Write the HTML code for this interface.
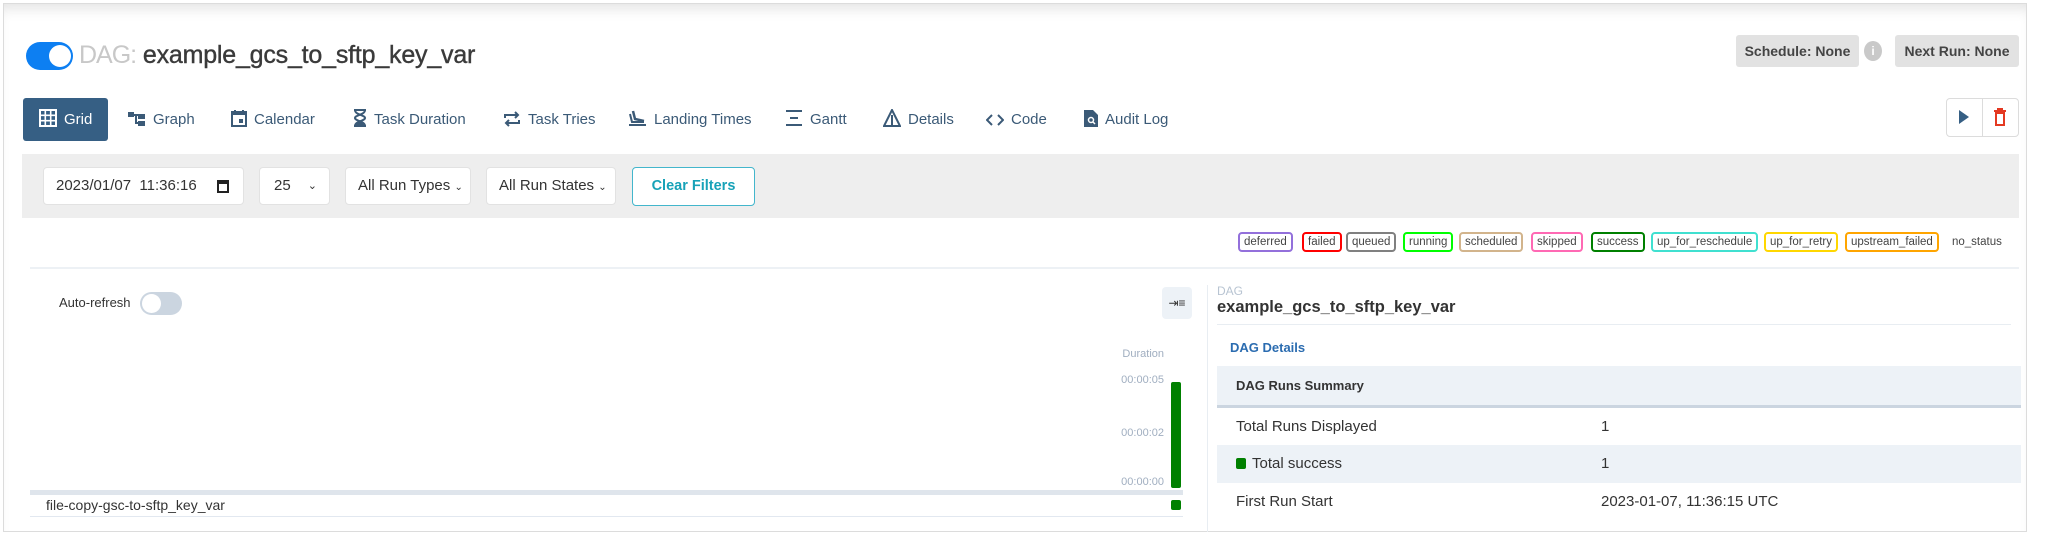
<!DOCTYPE html>
<html><head><meta charset="utf-8"><style>
*{box-sizing:border-box;margin:0;padding:0}
body{width:2048px;height:535px;background:#fff;font-family:"Liberation Sans",Arial,sans-serif;position:relative;overflow:hidden;color:#333}
.a{position:absolute}
.frame{left:3px;top:3px;width:2024px;height:529px;border:1px solid #dcdcdc;box-shadow:inset 0 12px 14px -8px rgba(0,0,0,.12)}
.nav{top:98px;height:43px;line-height:43px;font-size:15px;color:#3b5a77;white-space:nowrap}
.nav svg{vertical-align:-3px;margin-right:7px}
.inp{top:167px;height:38px;background:#fff;border:1px solid #e2e2e2;border-radius:4px;font-size:15px;line-height:36px;color:#333;padding-left:12px}
.lg{top:232px;height:20px;border:2px solid;border-radius:4px;font-size:11.5px;line-height:16px;padding:0 4px;color:#444;white-space:nowrap}
.row{left:1217px;width:804px;font-size:15px;color:#333}
.gl{font-size:11px;color:#a0aec0;text-align:right;width:60px;left:1104px}
</style></head><body>
<div class="a frame"></div>

<!-- header -->
<div class="a" style="left:26px;top:42px;width:47px;height:28px;border-radius:14px;background:#0d7ff2"></div>
<div class="a" style="left:49px;top:45px;width:22px;height:22px;border-radius:50%;background:#fff"></div>
<div class="a" style="left:79px;top:38px;font-size:25px;line-height:34px;white-space:nowrap;letter-spacing:-0.2px"><span style="color:#c8c8c8;letter-spacing:-1px">DAG:</span> <span style="color:#3a3a3a;-webkit-text-stroke:0.4px #3a3a3a">example_gcs_to_sftp_key_var</span></div>

<div class="a" style="left:1736px;top:35px;width:123px;height:32px;background:#e2e2e2;border-radius:3px;font-weight:bold;font-size:14px;line-height:32px;text-align:center;color:#444">Schedule: None</div>
<div class="a" style="left:1864px;top:41px;width:18px;height:20px;border-radius:50%;background:#c9c9c9;color:#fff;font-size:12px;text-align:center;line-height:20px;font-weight:bold">i</div>
<div class="a" style="left:1895px;top:35px;width:124px;height:32px;background:#e2e2e2;border-radius:3px;font-weight:bold;font-size:14px;line-height:32px;text-align:center;color:#444">Next Run: None</div>

<!-- nav -->
<div class="a nav" style="left:23px;width:85px;background:#365f84;border-radius:3px;color:#fff;padding-left:16px">
<svg width="18" height="18" viewBox="0 0 18 18"><rect x="1" y="1" width="16" height="16" fill="none" stroke="#fff" stroke-width="2"/><path d="M6.3 1v16M11.7 1v16M1 6.3h16M1 11.7h16" stroke="#fff" stroke-width="1.6"/></svg>Grid</div>
<div class="a nav" style="left:128px"><svg width="18" height="16" viewBox="0 0 18 16"><rect x="0" y="1" width="6" height="5" fill="#3b5a77"/><rect x="10" y="3" width="7" height="5" fill="#3b5a77"/><rect x="10" y="10" width="7" height="5" fill="#3b5a77"/><path d="M6 4h4M8 4v8h2" stroke="#3b5a77" stroke-width="2" fill="none"/></svg>Graph</div>
<div class="a nav" style="left:231px"><svg width="16" height="18" viewBox="0 0 16 18"><rect x="1" y="3" width="14" height="14" fill="none" stroke="#3b5a77" stroke-width="2"/><rect x="1" y="3" width="14" height="3" fill="#3b5a77"/><path d="M4 1v3M12 1v3" stroke="#3b5a77" stroke-width="2"/><rect x="8" y="10" width="4" height="4" fill="#3b5a77"/></svg>Calendar</div>
<div class="a nav" style="left:353px"><svg width="14" height="18" viewBox="0 0 14 18"><path d="M1 1h12M1 17h12M2 1c0 5 10 5 10 8s-10 3-10 8M12 1c0 5-10 5-10 8s10 3 10 8" stroke="#3b5a77" stroke-width="2" fill="none"/><path d="M3 16l4-5 4 5z" fill="#3b5a77"/></svg>Task Duration</div>
<div class="a nav" style="left:503px"><svg width="18" height="16" viewBox="0 0 18 16"><path d="M2 7V4h13M12 1l3 3-3 3M16 9v3H3M6 9l-3 3 3 3" stroke="#3b5a77" stroke-width="2" fill="none"/></svg>Task Tries</div>
<div class="a nav" style="left:627px"><svg width="20" height="18" viewBox="0 0 20 18"><path d="M2 16h17M3 5l2 8h12" stroke="#3b5a77" stroke-width="2" fill="none"/><path d="M6 2l2 8 9 2" stroke="#3b5a77" stroke-width="2.5" fill="none"/></svg>Landing Times</div>
<div class="a nav" style="left:785px"><svg width="18" height="18" viewBox="0 0 18 18"><path d="M1 2h16M5 9h8M1 16h16" stroke="#3b5a77" stroke-width="2"/></svg>Gantt</div>
<div class="a nav" style="left:883px"><svg width="18" height="18" viewBox="0 0 18 18"><path d="M9 1L1 17h16z" stroke="#3b5a77" stroke-width="2" fill="none"/><path d="M9 6v11" stroke="#3b5a77" stroke-width="2"/></svg>Details</div>
<div class="a nav" style="left:986px"><svg width="18" height="14" viewBox="0 0 18 14"><path d="M6 2L1 7l5 5M12 2l5 5-5 5" stroke="#3b5a77" stroke-width="2" fill="none"/></svg>Code</div>
<div class="a nav" style="left:1084px"><svg width="14" height="18" viewBox="0 0 14 18"><path d="M0 1h9l5 5v12H0z" fill="#3b5a77"/><circle cx="7" cy="11" r="2.5" stroke="#fff" stroke-width="1.5" fill="none"/><path d="M9 13l2 2" stroke="#fff" stroke-width="1.5"/></svg>Audit Log</div>

<div class="a" style="left:1946px;top:98px;width:73px;height:39px;border:1px solid #dcdcdc;border-radius:4px"></div>
<div class="a" style="left:1982px;top:98px;width:1px;height:39px;background:#dcdcdc"></div>
<svg class="a" style="left:1959px;top:110px" width="10" height="14"><path d="M0 0l10 7-10 7z" fill="#365f84"/></svg>
<svg class="a" style="left:1994px;top:108px" width="12" height="18" viewBox="0 0 12 18"><path d="M0 3h12M4 3V1h4v2" stroke="#e43921" stroke-width="2" fill="none"/><rect x="2" y="5" width="8" height="12" fill="none" stroke="#e43921" stroke-width="2"/></svg>

<!-- filters -->
<div class="a" style="left:22px;top:154px;width:1997px;height:64px;background:#eeeeee"></div>
<div class="a inp" style="left:43px;width:201px">2023/01/07&nbsp; 11:36:16 <svg style="position:absolute;right:14px;top:11px" width="12" height="14" viewBox="0 0 12 14"><rect x="1" y="2" width="10" height="11" fill="none" stroke="#222" stroke-width="2"/><rect x="1" y="2" width="10" height="3" fill="#222"/></svg></div>
<div class="a inp" style="left:259px;width:71px;padding-left:14px">25<span style="position:absolute;right:12px;font-size:11px">&#8964;</span></div>
<div class="a inp" style="left:345px;width:126px">All Run Types <span style="font-size:10px">&#8964;</span></div>
<div class="a inp" style="left:486px;width:130px">All Run States <span style="font-size:10px">&#8964;</span></div>
<div class="a" style="left:632px;top:167px;width:123px;height:39px;border:1.5px solid #43b6cc;border-radius:4px;background:#fff;color:#17a2b8;font-weight:bold;font-size:14.5px;text-align:center;line-height:36px">Clear Filters</div>

<!-- legend -->
<div class="a lg" style="left:1238px;border-color:#9370db">deferred</div>
<div class="a lg" style="left:1302px;border-color:#ff0000">failed</div>
<div class="a lg" style="left:1346px;border-color:#808080">queued</div>
<div class="a lg" style="left:1403px;border-color:#00ff00">running</div>
<div class="a lg" style="left:1459px;border-color:#d2b48c">scheduled</div>
<div class="a lg" style="left:1531px;border-color:#ff69b4">skipped</div>
<div class="a lg" style="left:1591px;border-color:#008000">success</div>
<div class="a lg" style="left:1651px;border-color:#40e0d0">up_for_reschedule</div>
<div class="a lg" style="left:1764px;border-color:#ffd700">up_for_retry</div>
<div class="a lg" style="left:1845px;border-color:#ffa500">upstream_failed</div>
<div class="a lg" style="left:1946px;border-color:transparent">no_status</div>
<div class="a" style="left:30px;top:267px;width:1989px;height:2px;background:#edf1f5"></div>

<!-- grid -->
<div class="a" style="left:59px;top:295px;font-size:13px;color:#333">Auto-refresh</div>
<div class="a" style="left:140px;top:292px;width:42px;height:23px;border-radius:12px;background:#cbd5e0"></div>
<div class="a" style="left:142px;top:294px;width:19px;height:19px;border-radius:50%;background:#fff"></div>
<div class="a" style="left:1162px;top:287px;width:30px;height:32px;background:#edf2f7;border-radius:4px;font-size:12px;text-align:center;line-height:32px;color:#333">&#8677;&#8801;</div>
<div class="a" style="left:1207px;top:285px;width:1px;height:247px;background:#e8edf2"></div>

<div class="a gl" style="top:348px">Duration</div>
<div class="a gl" style="top:374px">00:00:05</div>
<div class="a gl" style="top:427px">00:00:02</div>
<div class="a gl" style="top:476px">00:00:00</div>
<div class="a" style="left:1171px;top:382px;width:10px;height:106px;background:#008000;border-radius:2px"></div>
<div class="a" style="left:30px;top:490px;width:1153px;height:5px;background:#dfe5ec"></div>
<div class="a" style="left:46px;top:497px;font-size:14px;color:#333">file-copy-gsc-to-sftp_key_var</div>
<div class="a" style="left:1171px;top:500px;width:10px;height:10px;background:#008000;border-radius:2px"></div>
<div class="a" style="left:30px;top:516px;width:1153px;height:1px;background:#e2e8f0"></div>

<!-- details -->
<div class="a" style="left:1217px;top:284px;font-size:12px;color:#b8c4d2">DAG</div>
<div class="a" style="left:1217px;top:298px;font-size:16.5px;font-weight:bold;color:#333">example_gcs_to_sftp_key_var</div>
<div class="a" style="left:1217px;top:324px;width:794px;height:1px;background:#e8edf2"></div>
<div class="a" style="left:1230px;top:340px;font-size:13px;font-weight:bold;color:#2b6cb0">DAG Details</div>
<div class="a row" style="top:366px;height:42px;background:#edf2f7;border-bottom:3px solid #cbd5e0;font-weight:bold;font-size:13px;line-height:39px;padding-left:19px">DAG Runs Summary</div>
<div class="a row" style="top:408px;height:37px;line-height:37px;padding-left:19px">Total Runs Displayed<span style="position:absolute;left:384px">1</span></div>
<div class="a row" style="top:445px;height:38px;line-height:38px;padding-left:19px;background:#edf2f7"><span style="display:inline-block;width:10px;height:11px;background:#008000;border-radius:2px;margin-right:6px;vertical-align:-1px"></span>Total success<span style="position:absolute;left:384px">1</span></div>
<div class="a row" style="top:483px;height:38px;line-height:38px;padding-left:19px">First Run Start<span style="position:absolute;left:384px">2023-01-07, 11:36:15 UTC</span></div>
</body></html>
